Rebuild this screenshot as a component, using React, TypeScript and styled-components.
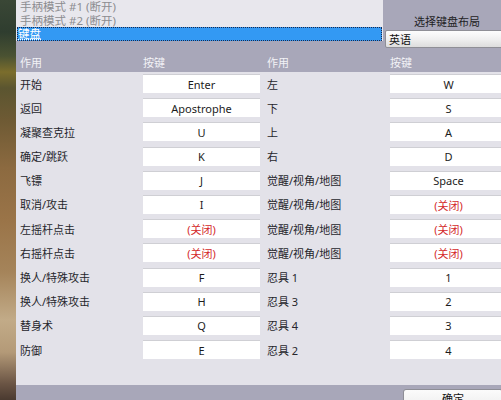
import styled, { createGlobalStyle } from 'styled-components';

const GlobalStyle = createGlobalStyle`
  html, body {
    margin: 0;
    padding: 0;
    overflow: hidden;
    background: #a8a7b9;
  }
  * {
    box-sizing: border-box;
  }
`;

const UI_FONT = `"Noto Sans", "Noto Sans CJK SC", sans-serif`;

type Mapping = {
  action: string;
  key: string | null;
};

const leftMappings: Mapping[] = [
  { action: '开始', key: 'Enter' },
  { action: '返回', key: 'Apostrophe' },
  { action: '凝聚查克拉', key: 'U' },
  { action: '确定/跳跃', key: 'K' },
  { action: '飞镖', key: 'J' },
  { action: '取消/攻击', key: 'I' },
  { action: '左摇杆点击', key: null },
  { action: '右摇杆点击', key: null },
  { action: '换人/特殊攻击', key: 'F' },
  { action: '换人/特殊攻击', key: 'H' },
  { action: '替身术', key: 'Q' },
  { action: '防御', key: 'E' },
];

const rightMappings: Mapping[] = [
  { action: '左', key: 'W' },
  { action: '下', key: 'S' },
  { action: '上', key: 'A' },
  { action: '右', key: 'D' },
  { action: '觉醒/视角/地图', key: 'Space' },
  { action: '觉醒/视角/地图', key: null },
  { action: '觉醒/视角/地图', key: null },
  { action: '觉醒/视角/地图', key: null },
  { action: '忍具 1', key: '1' },
  { action: '忍具 3', key: '2' },
  { action: '忍具 4', key: '3' },
  { action: '忍具 2', key: '4' },
];

const devices = ['手柄模式 #1 (断开)', '手柄模式 #2 (断开)', '键盘'];

const Screen = styled.div`
  display: flex;
  width: 501px;
  height: 400px;
  overflow: hidden;
  font-family: ${UI_FONT};
`;

const GameBackdrop = styled.div`
  width: 16px;
  flex-shrink: 0;
  background: linear-gradient(
    180deg,
    #3a4736 0%,
    #2f3d2f 8%,
    #4a5232 14%,
    #7b6d2c 18%,
    #5b5530 22%,
    #6e5a34 30%,
    #8c6a40 42%,
    #9a7448 55%,
    #a5845a 68%,
    #c2ab88 80%,
    #b49a78 88%,
    #6a5444 96%,
    #4a3a30 100%
  );
`;

const Dialog = styled.div`
  flex: 1;
  min-width: 0;
  display: flex;
  flex-direction: column;
  background: #a8a7b9;
`;

const TopBar = styled.div`
  display: flex;
  height: 41px;
  flex-shrink: 0;
`;

const DeviceList = styled.div`
  width: 367px;
  flex-shrink: 0;
  background: #e8e7ed;
  overflow: hidden;
  padding: 0 1px;
`;

const DeviceItem = styled.div<{ $selected?: boolean }>`
  height: ${({ $selected }) => ($selected ? '14px' : '13.5px')};
  line-height: 13px;
  font-size: 11.5px;
  padding-left: ${({ $selected }) => ($selected ? '1px' : '3px')};
  color: ${({ $selected }) => ($selected ? '#ffffff' : '#8c8c90')};
  background: ${({ $selected }) => ($selected ? '#3399f3' : 'transparent')};
  outline: ${({ $selected }) => ($selected ? '1px dotted #1a2a50' : 'none')};
  outline-offset: -1px;
  white-space: nowrap;

  & > span {
    text-decoration: ${({ $selected }) => ($selected ? 'underline' : 'none')};
    text-decoration-style: dotted;
  }
`;

const LayoutPanel = styled.div`
  flex: 1;
  min-width: 0;
  display: flex;
  flex-direction: column;
  align-items: center;
  padding-top: 14px;
`;

const PanelTitle = styled.div`
  font-size: 11px;
  line-height: 15px;
  color: #1e1e24;
  padding-left: 10px;
  white-space: nowrap;
`;

const SelectBox = styled.div`
  align-self: flex-start;
  position: relative;
  z-index: 1;
  margin-left: 2px;
  margin-top: 1px;
  width: 130px;
  height: 18px;
  flex-shrink: 0;
  display: flex;
  align-items: center;
  padding-left: 3px;
  font-size: 11px;
  color: #111;
  border: 1px solid #8f8f96;
  border-radius: 2px;
  background: linear-gradient(180deg, #fdfdfd 0%, #f0f0f0 50%, #dddddd 100%);
`;

const MappingGrid = styled.div`
  display: grid;
  grid-template-columns: 123px 117px 130px 117px;
  padding-left: 4px;
`;

const MappingHeader = styled(MappingGrid)`
  height: 31px;
  flex-shrink: 0;
  align-items: end;
  padding-bottom: 1px;
`;

const HeaderLabel = styled.div<{ $indent?: boolean }>`
  font-size: 11px;
  line-height: 16px;
  color: #f2f2f6;
  padding-left: ${({ $indent }) => ($indent ? '7px' : '0')};
`;

const MappingBody = styled(MappingGrid)`
  flex: 1;
  align-content: start;
  grid-auto-rows: 19px;
  row-gap: 5.2px;
  padding-top: 2px;
  background: #e3e2e9;
`;

const ActionLabel = styled.div<{ $indent?: boolean }>`
  display: flex;
  align-items: center;
  font-size: 11px;
  color: #26262c;
  white-space: nowrap;
  padding-left: ${({ $indent }) => ($indent ? '7px' : '0')};
`;

const KeyField = styled.div<{ $off?: boolean }>`
  display: flex;
  align-items: center;
  justify-content: center;
  background: #ffffff;
  border-top: 1px solid #cfcfd4;
  font-size: 11px;
  color: ${({ $off }) => ($off ? '#d42a2a' : '#1c1c1c')};
`;

const Footer = styled.div`
  height: 15px;
  flex-shrink: 0;
  display: flex;
  justify-content: flex-end;
  padding-top: 4px;
  overflow: hidden;
`;

const ConfirmButton = styled.div`
  width: 100px;
  height: 22px;
  margin-right: -2px;
  border: 1px solid #8e8e96;
  border-radius: 3px;
  background: linear-gradient(180deg, #fbfbfb 0%, #ececec 100%);
  font-size: 11px;
  color: #111;
  text-align: center;
  line-height: 17px;
`;

function KeyCell({ value }: { value: string | null }) {
  return <KeyField $off={value === null}>{value ?? '(关闭)'}</KeyField>;
}

export default function App() {
  return (
    <>
      <GlobalStyle />
      <Screen>
        <GameBackdrop />
        <Dialog>
          <TopBar>
            <DeviceList>
              {devices.map((name, i) => (
                <DeviceItem key={name} $selected={i === devices.length - 1}>
                  <span>{name}</span>
                </DeviceItem>
              ))}
            </DeviceList>
            <LayoutPanel>
              <PanelTitle>选择键盘布局</PanelTitle>
              <SelectBox>英语</SelectBox>
            </LayoutPanel>
          </TopBar>
          <MappingHeader>
            <HeaderLabel>作用</HeaderLabel>
            <HeaderLabel>按键</HeaderLabel>
            <HeaderLabel $indent>作用</HeaderLabel>
            <HeaderLabel>按键</HeaderLabel>
          </MappingHeader>
          <MappingBody>
            {leftMappings.map((left, i) => {
              const right = rightMappings[i];
              return [
                <ActionLabel key={`la${i}`}>{left.action}</ActionLabel>,
                <KeyCell key={`lk${i}`} value={left.key} />,
                <ActionLabel key={`ra${i}`} $indent>
                  {right.action}
                </ActionLabel>,
                <KeyCell key={`rk${i}`} value={right.key} />,
              ];
            })}
          </MappingBody>
          <Footer>
            <ConfirmButton>确定</ConfirmButton>
          </Footer>
        </Dialog>
      </Screen>
    </>
  );
}
